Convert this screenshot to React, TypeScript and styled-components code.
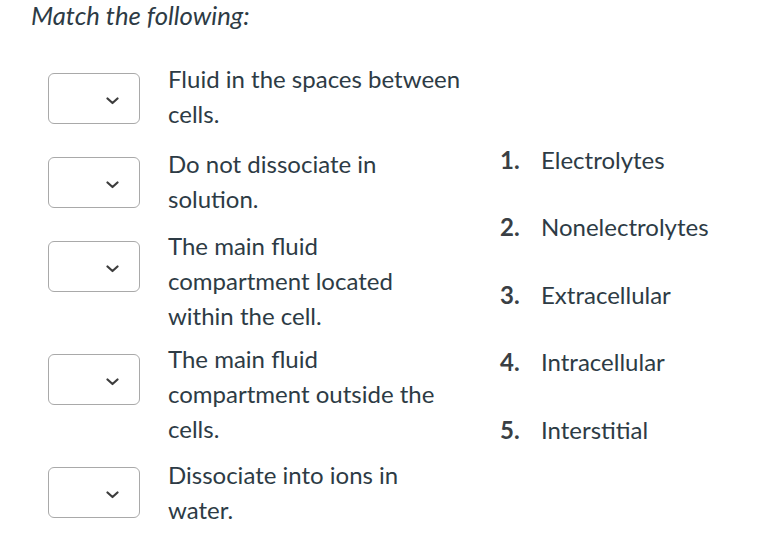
import React from "react";
import styled, { createGlobalStyle } from "styled-components";

const Global = createGlobalStyle`
  html, body { margin: 0; padding: 0; background: #ffffff; }
  body { font-family: Lato, "Open Sans", sans-serif; color: #2d3b45; }
`;

const Page = styled.div`
  width: 767px;
  height: 537px;
  overflow: hidden;
  box-sizing: border-box;
`;

const Title = styled.div`
  font-style: italic;
  font-size: 25.7px;
  line-height: 30px;
  padding: 0 0 0 31px;
  color: #2d3b45;
`;

const Body = styled.div`
  display: flex;
  align-items: center;
  padding: 31px 0 0 48px;
`;

const Rows = styled.div`
  display: flex;
  flex-direction: column;
  width: 452px;
`;

const Row = styled.div<{ $gap: number; $offset: number }>`
  display: flex;
  align-items: flex-start;
  gap: 28px;
  margin-bottom: ${(p) => p.$gap}px;
  & > div:first-child { margin-top: ${(p) => p.$offset}px; }
`;

const Select = styled.div`
  position: relative;
  flex: none;
  width: 92px;
  height: 51px;
  box-sizing: border-box;
  border: 1px solid #a9a9a9;
  border-radius: 6px;
  background: #fff;
`;

const Chevron = styled.svg`
  position: absolute;
  left: 57px;
  top: 23px;
`;

const Prompt = styled.div`
  font-size: 24px;
  line-height: 35px;
  white-space: nowrap;
`;

const Answers = styled.ol`
  list-style: none;
  margin: 0;
  padding: 0;
  display: flex;
  flex-direction: column;
  gap: 32.5px;
`;

const Answer = styled.li`
  display: flex;
  font-size: 24px;
  line-height: 35px;
  white-space: nowrap;
`;

const Num = styled.span`
  width: 41px;
  font-weight: 700;
  color: #3a3f44;
`;

const rows = [
  { lines: ["Fluid in the spaces between", "cells."], gap: 15, offset: 12 },
  { lines: ["Do not dissociate in", "solution."], gap: 12, offset: 11 },
  { lines: ["The main fluid", "compartment located", "within the cell."], gap: 8, offset: 13 },
  { lines: ["The main fluid", "compartment outside the", "cells."], gap: 11, offset: 13 },
  { lines: ["Dissociate into ions in", "water."], gap: 0, offset: 10 },
];

const answers = ["Electrolytes", "Nonelectrolytes", "Extracellular", "Intracellular", "Interstitial"];

export default function App() {
  return (
    <Page>
      <Global />
      <Title>Match the following:</Title>
      <Body>
        <Rows>
          {rows.map((r, i) => (
            <Row key={i} $gap={r.gap} $offset={r.offset}>
              <Select>
                <Chevron width="13" height="8" viewBox="0 0 13 8">
                  <path d="M1.5 1.5 L6.5 6 L11.5 1.5" fill="none" stroke="#3d3d3d" strokeWidth="2.2" strokeLinecap="round" strokeLinejoin="round" />
                </Chevron>
              </Select>
              <Prompt>
                {r.lines.map((l, j) => (
                  <React.Fragment key={j}>
                    {l}
                    {j < r.lines.length - 1 && <br />}
                  </React.Fragment>
                ))}
              </Prompt>
            </Row>
          ))}
        </Rows>
        <Answers>
          {answers.map((a, i) => (
            <Answer key={a}>
              <Num>{i + 1}.</Num>
              <span>{a}</span>
            </Answer>
          ))}
        </Answers>
      </Body>
    </Page>
  );
}
